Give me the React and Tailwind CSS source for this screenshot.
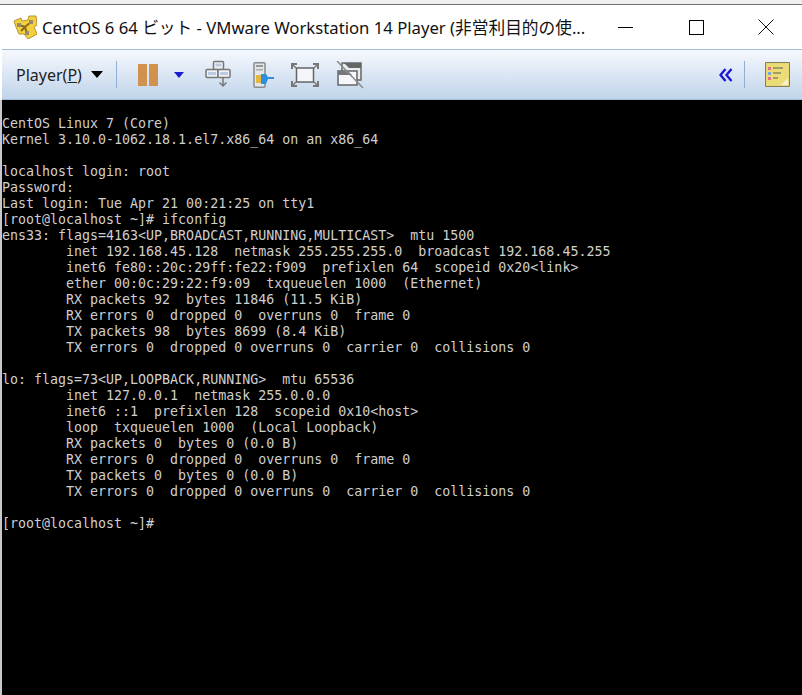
import React from 'react';

const consoleLines = [
  '',
  'CentOS Linux 7 (Core)',
  'Kernel 3.10.0-1062.18.1.el7.x86_64 on an x86_64',
  '',
  'localhost login: root',
  'Password:',
  'Last login: Tue Apr 21 00:21:25 on tty1',
  '[root@localhost ~]# ifconfig',
  'ens33: flags=4163<UP,BROADCAST,RUNNING,MULTICAST>  mtu 1500',
  '        inet 192.168.45.128  netmask 255.255.255.0  broadcast 192.168.45.255',
  '        inet6 fe80::20c:29ff:fe22:f909  prefixlen 64  scopeid 0x20<link>',
  '        ether 00:0c:29:22:f9:09  txqueuelen 1000  (Ethernet)',
  '        RX packets 92  bytes 11846 (11.5 KiB)',
  '        RX errors 0  dropped 0  overruns 0  frame 0',
  '        TX packets 98  bytes 8699 (8.4 KiB)',
  '        TX errors 0  dropped 0 overruns 0  carrier 0  collisions 0',
  '',
  'lo: flags=73<UP,LOOPBACK,RUNNING>  mtu 65536',
  '        inet 127.0.0.1  netmask 255.0.0.0',
  '        inet6 ::1  prefixlen 128  scopeid 0x10<host>',
  '        loop  txqueuelen 1000  (Local Loopback)',
  '        RX packets 0  bytes 0 (0.0 B)',
  '        RX errors 0  dropped 0  overruns 0  frame 0',
  '        TX packets 0  bytes 0 (0.0 B)',
  '        TX errors 0  dropped 0 overruns 0  carrier 0  collisions 0',
  '',
  '[root@localhost ~]#',
];

const AppLogo = () => (
  <svg width="24" height="24" viewBox="0 0 24 24">
    <path d="M1 6 L8 3 L9 6 L15 5 L16 1 L23 1 L24 10 L21 12 L24 19 L15 24 L11 19 L6 19 L3 12 Z" fill="#f2d13c" stroke="#b8942a" strokeWidth="1" />
    <path d="M6 10 L12 12 L18 7 M12 12 L14 19 M12 12 L8 16" stroke="#8a6a20" strokeWidth="2" fill="none" />
    <rect x="4" y="8" width="4" height="4" fill="#9a8a70" />
    <rect x="16" y="5" width="4" height="4" fill="#9a8a70" />
    <rect x="12" y="16" width="4" height="4" fill="#9a8a70" />
  </svg>
);

const SnapshotIcon = () => (
  <svg width="26" height="30" viewBox="0 0 26 30">
    <rect x="8.5" y="1.5" width="10" height="8" rx="1" fill="#eef1f6" stroke="#777" strokeWidth="1.5" />
    <rect x="10.5" y="3.5" width="6" height="3" fill="#b9cbe2" />
    <rect x="1" y="9.5" width="12" height="8" rx="1" fill="#eef1f6" stroke="#777" strokeWidth="1.5" />
    <rect x="3" y="12" width="8" height="3" fill="#b9cbe2" />
    <rect x="13" y="9.5" width="12" height="8" rx="1" fill="#eef1f6" stroke="#777" strokeWidth="1.5" />
    <rect x="15" y="12" width="8" height="3" fill="#b9cbe2" />
    <path d="M18 18 V25 M14.5 22.5 L18 26 L21.5 22.5" stroke="#777" strokeWidth="1.5" fill="none" />
  </svg>
);

const RemovableIcon = () => (
  <svg width="22" height="26" viewBox="0 0 22 26">
    <rect x="1" y="0.75" width="11" height="24.5" rx="1" fill="#e4e6ea" stroke="#8a8a8a" strokeWidth="1.5" />
    <rect x="3" y="3" width="7" height="2" fill="#999" />
    <rect x="3" y="7" width="7" height="1.5" fill="#aaa" />
    <rect x="3" y="13" width="6" height="8" fill="#e0b83c" />
    <path d="M8 12 H13 L15 15 H21 V17 H15 L13 22 H8 Z" fill="#2f8fdc" />
  </svg>
);

const FullScreenIcon = () => (
  <svg width="28" height="24" viewBox="0 0 28 24">
    <rect x="5.5" y="5" width="17" height="14" fill="#f4f6f9" stroke="#666" strokeWidth="1.5" />
    <path d="M1 6 V1 H6 M22 1 H27 V6 M1 18 V23 H6 M27 18 V23 H22" stroke="#777" strokeWidth="2" fill="none" />
    <path d="M1 1 L5 5 M27 1 L23 5 M1 23 L5 19 M27 23 L23 19" stroke="#777" strokeWidth="1.5" />
  </svg>
);

const UnityIcon = () => (
  <svg width="28" height="28" viewBox="0 0 28 28">
    <rect x="6" y="2" width="19" height="17" fill="#e9ecf1" stroke="#666" strokeWidth="1.5" />
    <path d="M8 2 H25 V7 L13 7 Z" fill="#666" />
    <rect x="2" y="10" width="19" height="14" fill="#f6f7fa" stroke="#666" strokeWidth="1.5" />
    <path d="M2 10 H12 L16 14 H2 Z" fill="#777" />
    <path d="M1 0 L27 27" stroke="#8a8a8a" strokeWidth="1.5" />
  </svg>
);

const CollapseIcon = () => (
  <svg width="14" height="14" viewBox="0 0 14 14">
    <path d="M6.5 1 L1.5 7 L6.5 13 M12.5 1 L7.5 7 L12.5 13" stroke="#1a1ad8" strokeWidth="2.4" fill="none" />
  </svg>
);

const NotesIcon = () => (
  <svg width="25" height="25" viewBox="0 0 25 25">
    <path d="M0.5 0.5 H24.5 V24.5 H0.5 Z" fill="#e8d673" stroke="#85805a" />
    <rect x="2" y="2" width="21" height="21" fill="#ecdc78" />
    <rect x="3" y="5" width="3" height="3" fill="#e0738a" />
    <rect x="3" y="10" width="3" height="3" fill="#74a8e0" />
    <rect x="3" y="15" width="3" height="3" fill="#e0738a" />
    <path d="M8 6 H18 M8 11 H16 M8 16 H13" stroke="#8b8860" strokeWidth="1.5" />
    <path d="M16 23 L23 16 V23 Z" fill="#f6f2d0" />
  </svg>
);

const Divider = () => <div className="w-px h-[27px] bg-[#8fb0d3]" />;

const App = () => (
  <div className="w-[802px] h-[695px] overflow-hidden bg-white flex flex-col" style={{ fontFamily: '"Noto Sans", "Noto Sans CJK JP", sans-serif' }}>
    {/* window edge */}
    <div className="h-[5px] bg-[#f0f0f0] border-b border-[#707070] shrink-0" />

    {/* title bar */}
    <div className="h-[44px] shrink-0 flex items-center pl-[13px] bg-white">
      <AppLogo />
      <span className="ml-[5px] mt-[2px] text-[16.7px] text-[#111] whitespace-nowrap">
        CentOS 6 64 ビット - VMware Workstation 14 Player (非営利目的の使...
      </span>
      <div className="ml-auto flex items-center">
        <div className="w-[72px] flex justify-center"><div className="w-[15px] h-px bg-black" /></div>
        <div className="w-[70px] flex justify-center"><div className="w-[15px] h-[15px] border border-black" /></div>
        <div className="w-[70px] mr-[1px] flex justify-center">
          <svg width="16" height="16" viewBox="0 0 16 16"><path d="M0.5 0.5 L15.5 15.5 M15.5 0.5 L0.5 15.5" stroke="#111" strokeWidth="1" /></svg>
        </div>
      </div>
    </div>

    {/* toolbar */}
    <div className="h-[51px] shrink-0 flex items-center border-y border-[#a3bcd8] bg-gradient-to-b from-[#f6f9fd] to-[#c0d4ea] pl-[14px] pr-[12px] ml-[2px]">
      <span className="text-[16px] text-[#222]">Player(<span className="underline">P</span>)</span>
      <div className="ml-[9px] w-0 h-0 border-x-[6px] border-x-transparent border-t-[7px] border-t-black" />
      <div className="ml-[13px]"><Divider /></div>
      <div className="ml-[21px] flex gap-[2px]">
        <div className="w-[9px] h-[22px] bg-[#d1914f]" />
        <div className="w-[9px] h-[22px] bg-[#d1914f]" />
      </div>
      <div className="ml-[16px] w-0 h-0 border-x-[5px] border-x-transparent border-t-[6px] border-t-[#1a1ad0]" />
      <div className="ml-[21px]"><SnapshotIcon /></div>
      <div className="ml-[22px]"><RemovableIcon /></div>
      <div className="ml-[16px]"><FullScreenIcon /></div>
      <div className="ml-[17px]"><UnityIcon /></div>
      <div className="ml-auto flex items-center">
        <CollapseIcon />
        <div className="ml-[11px]"><Divider /></div>
        <div className="ml-[20px]"><NotesIcon /></div>
      </div>
    </div>

    {/* guest console */}
    <div className="flex-1 flex bg-black">
      <div className="w-[2px] bg-[#c8c8c8] shrink-0" />
      <pre
        className="m-0 text-[13.3px] leading-[16px] text-[#cfcfcf] whitespace-pre"
        style={{ fontFamily: '"DejaVu Sans Mono", "Liberation Mono", monospace' }}
      >
        {consoleLines.join('\n')}
      </pre>
    </div>
  </div>
);

export default App;
